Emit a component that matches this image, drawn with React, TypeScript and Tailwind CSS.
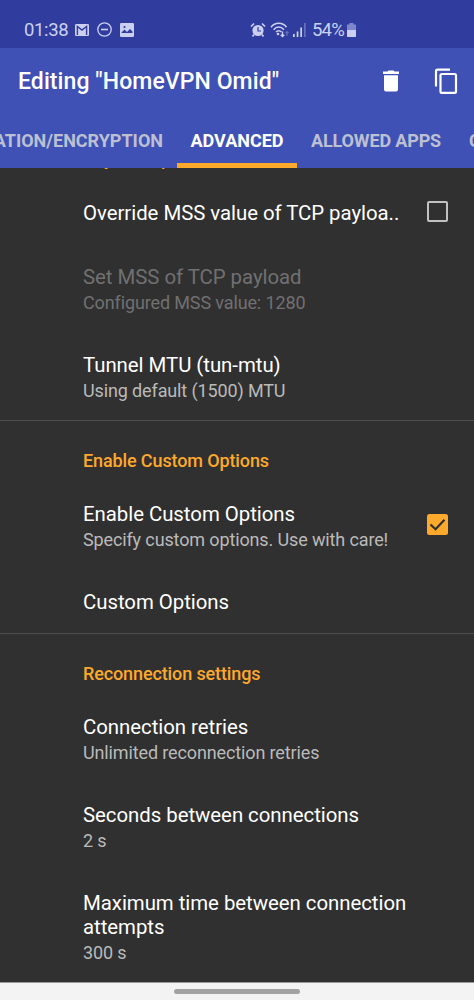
import React from "react";

const Title = ({ children, className = "" }: { children: React.ReactNode; className?: string }) => (
  <div className={`text-[20.4px] leading-6 tracking-[-0.04px] whitespace-nowrap ${className}`}>{children}</div>
);

const Summary = ({ children, className = "text-[#bababa]" }: { children: React.ReactNode; className?: string }) => (
  <div className={`mt-[2px] text-[18px] leading-6 tracking-[-0.13px] whitespace-nowrap ${className}`}>{children}</div>
);

const Category = ({ children }: { children: React.ReactNode }) => (
  <div className="text-[18px] leading-6 font-medium tracking-[-0.12px] text-[#fda92b] whitespace-nowrap">{children}</div>
);

function StatusBar() {
  return (
    <div className="flex h-12 shrink-0 items-start bg-[#303d9e] pt-[18px] text-[#cbd0f0]">
      <div className="ml-[24px] w-[51px] text-[18.5px] leading-6 tracking-[-0.35px] whitespace-nowrap">01:38</div>
      <svg className="mt-[6px] h-3 w-[14px]" viewBox="0 0 14 12">
        <rect width="14" height="12" rx="1.2" fill="currentColor" />
        <path d="M2.4 11V2.5L7 6l4.600-3.500V11" fill="none" stroke="#303d9e" strokeWidth="1.4" />
      </svg>
      <svg className="mt-[4px] ml-[8px] h-[15px] w-[15px]" viewBox="0 0 15 15" fill="none" stroke="currentColor" strokeWidth="1.3">
        <circle cx="7.500" cy="7.500" r="6.700" />
        <path d="M4 7.500h7" strokeWidth="1.6" />
      </svg>
      <svg className="mt-[5px] ml-[8px] h-[14px] w-[14px]" viewBox="0 0 14 14">
        <rect width="14" height="14" rx="1.200" fill="currentColor" />
        <path d="M1.500 9.500 4.500 6.500 7 9 10 6l2.500 2.500V10H1.500Z" fill="#303d9e" />
        <circle cx="4.500" cy="4" r="1.100" fill="#303d9e" />
      </svg>
      <svg className="mt-[4px] ml-[116px] h-4 w-4" viewBox="0 0 16 16" fill="none" stroke="currentColor">
        <circle cx="8" cy="8.500" r="5.600" fill="currentColor" stroke="none" />
        <path d="M1 4.500 4 1.500M15 4.500l-3-3M4 12.500l-1.500 2M12 12.500l1.500 2" strokeWidth="1.700" />
        <path d="M8 5v4h3" stroke="#303d9e" strokeWidth="1.200" />
      </svg>
      <svg className="mt-[4px] ml-[4px] h-4 w-[19px]" viewBox="0 0 19 16" fill="none" stroke="currentColor" strokeWidth="1.500">
        <path d="M1 5.200C5 0 12.500 0 16.500 5.200M3.600 7.700c2.700-3.500 7.600-3.500 10.300 0M6 10c1.500-1.800 4-1.800 5.500 0" />
        <circle cx="8" cy="12" r="1.300" fill="currentColor" stroke="none" />
        <path d="M12.500 9.500v5M10.700 12.700l1.800 1.800 1.800-1.800" strokeWidth="1.400" />
        <path d="M17 14V9.500M15.500 11 17 9.500 18.500 11" stroke="#6470bd" strokeWidth="1.200" />
      </svg>
      <svg className="mt-[5px] ml-[4px] h-[14px] w-[13px]" viewBox="0 0 13 14" fill="currentColor">
        <path d="M0 11h1.700v3H0zM3.700 8.500h1.700V14H3.700zM7.300 4.500H9V14H7.300z" />
        <path d="M11 0h1.700v14H11z" fill="#6470bd" />
      </svg>
      <div className="ml-[6px] w-[33px] text-[18.500px] leading-6 tracking-[-0.8px] whitespace-nowrap">54%</div>
      <svg className="mt-[5px] ml-[2px] h-[14px] w-[9px]" viewBox="0 0 9 14">
        <path d="M2.500 0h4v1.500H9V7H0V1.500h2.500z" fill="#7d87cb" />
        <path d="M0 7h9v6.200q0 .8-.8.800H.8Q0 14 0 13.200z" fill="currentColor" />
      </svg>
    </div>
  );
}

export default function App() {
  return (
    <div className="flex h-[1000px] w-[474px] flex-col overflow-hidden bg-[#303030] font-[Roboto,sans-serif] text-white">
      <StatusBar />
      <header className="flex h-[66px] shrink-0 items-center bg-[#3f51b5] pl-[18px]">
        <h1 className="w-[365px] pt-[2px] text-[23px] leading-8 font-medium tracking-[0.08px] whitespace-nowrap">Editing "HomeVPN Omid"</h1>
        <svg className="h-[22px] w-4" viewBox="0 0 16 22" fill="white">
          <path d="M0 1.600h4.500L5.500.500h5l1 1.100H16V4H0zM1 5.200h14V19.500q0 2-2 2H3q-2 0-2-2z" />
        </svg>
        <svg className="ml-[35px] h-[27px] w-6" viewBox="0 0 24 27" fill="none" stroke="white" strokeWidth="2.200">
          <path d="M2 18.500V3.200Q2 1.700 3.500 1.700H16" />
          <rect x="6.500" y="6" width="15.500" height="18.800" rx="1.400" />
        </svg>
      </header>
      <nav className="flex h-[54px] shrink-0 overflow-hidden bg-[#3f51b5] text-[18px] leading-[54px] font-bold whitespace-nowrap text-[#bcc0d2]">
        <div className="flex w-[177px] shrink-0 justify-end pr-[14px]">AUTHENTICATION/ENCRYPTION</div>
        <div className="w-[120px] shrink-0 border-b-[5px] border-[#fda92b] text-center text-white">ADVANCED</div>
        <div className="w-[158px] shrink-0 pl-[14px] tracking-[-0.15px]">ALLOWED APPS</div>
        <div className="shrink-0 pl-[14px]">CONNECTION</div>
      </nav>

      <main className="flex h-[814px] shrink-0 flex-col overflow-hidden">
        <section className="h-[253px] shrink-0 border-b border-[#4d4d4d] pl-[83px]">
          <div className="-mt-[21px] h-6 [clip-path:inset(21px_0_0_0)]">
            <Category>Payload options</Category>
          </div>
          <div className="mt-[30px] flex">
            <Title className="w-[344px]">Override MSS value of TCP payloa..</Title>
            <div className="h-[21px] w-[21px] rounded-[2px] border-2 border-[#c1c1c1]" />
          </div>
          <div className="mt-10">
            <Title className="text-[#707070]">Set MSS of TCP payload</Title>
            <Summary className="text-[#707070]">Configured MSS value: 1280</Summary>
          </div>
          <div className="mt-[38px]">
            <Title>Tunnel MTU (tun-mtu)</Title>
            <Summary>Using default (1500) MTU</Summary>
          </div>
        </section>

        <section className="h-[213px] shrink-0 border-b border-[#4d4d4d] pt-[28px] pl-[83px]">
          <Category>Enable Custom Options</Category>
          <div className="mt-[29px] flex items-start">
            <div className="w-[344px]">
              <Title>Enable Custom Options</Title>
              <Summary>Specify custom options. Use with care!</Summary>
            </div>
            <svg className="mt-[12px] h-[21px] w-[21px]" viewBox="0 0 21 21">
              <rect width="21" height="21" rx="2.500" fill="#fda92b" />
              <path d="m3.500 10.500 5 4.700 9-9.500" fill="none" stroke="#303030" strokeWidth="2.200" />
            </svg>
          </div>
          <div className="mt-[38px]">
            <Title>Custom Options</Title>
          </div>
        </section>

        <section className="pt-[28px] pl-[83px]">
          <Category>Reconnection settings</Category>
          <div className="mt-[29px]">
            <Title>Connection retries</Title>
            <Summary>Unlimited reconnection retries</Summary>
          </div>
          <div className="mt-[38px]">
            <Title>Seconds between connections</Title>
            <Summary>2 s</Summary>
          </div>
          <div className="mt-[38px]">
            <Title>
              Maximum time between connection
              <br />
              attempts
            </Title>
            <Summary>300 s</Summary>
          </div>
        </section>
      </main>
      <footer className="flex h-[18px] shrink-0 justify-center border-t border-[#999] bg-[#f3f3f3] pt-[6px]">
        <div className="h-[5px] w-[126px] rounded-full bg-[#a2a2a2]" />
      </footer>
    </div>
  );
}
